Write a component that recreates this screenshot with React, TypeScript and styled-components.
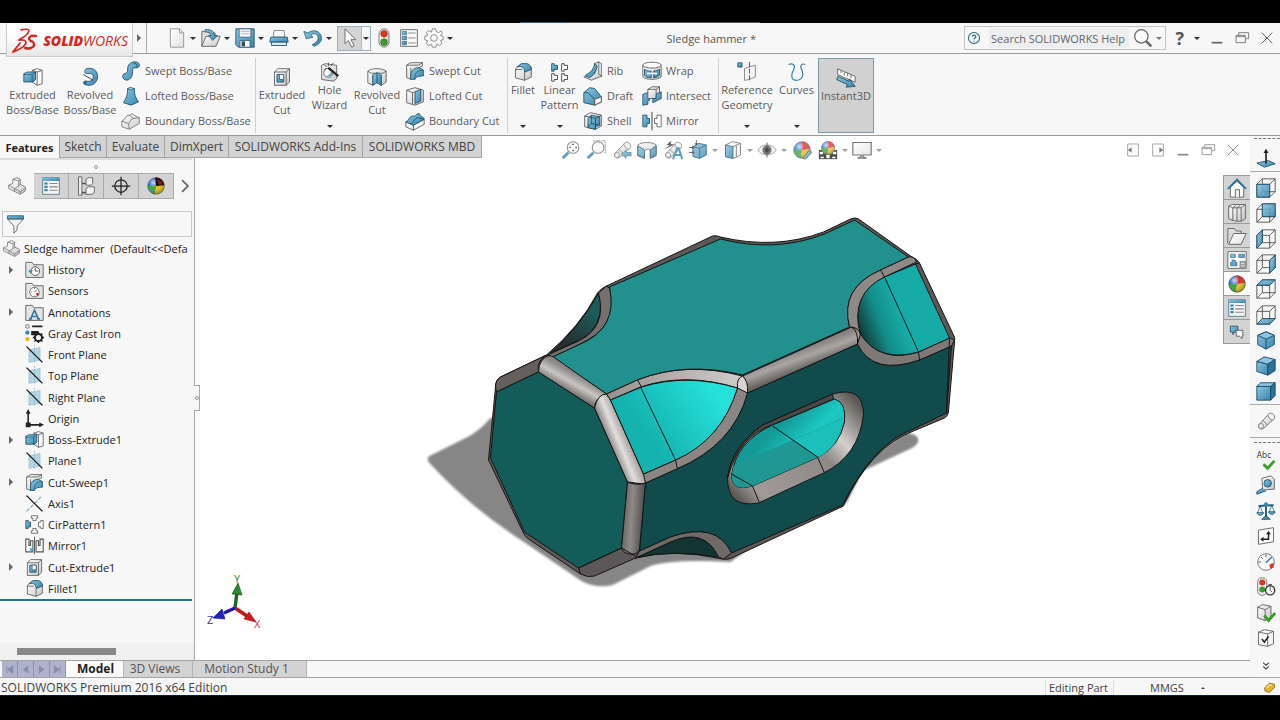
import React from "react";
import styled, { createGlobalStyle } from "styled-components";

const Global = createGlobalStyle`
  * { box-sizing: border-box; }
  html, body { margin: 0; padding: 0; background: #000; }
  body, button, input { font-family: "Open Sans", "Noto Sans", sans-serif; font-size: 12px; line-height: 15px; }
  button { margin: 0; padding: 0; border: 0; background: none; color: inherit; cursor: default; white-space: nowrap; }
  svg { display: block; flex: none; }
`;

/* ---------- icons, drawn on a 24 x 24 grid ---------- */

const B = "url(#blue)";
const G = "url(#grey)";
const D = "#1d4961";
const K = "#555";

const Ball = () => (
  <>
    <path d="M12 12L11 2A10 10 0 0 0 2 12z" fill="#2f6fd0" />
    <path d="M12 12L2 12A10 10 0 0 0 11 22z" fill="#39a23c" />
    <path d="M12 12L11 2A10 10 0 0 1 22 11z" fill="#d92c2c" />
    <path d="M12 12L11 22A10 10 0 0 0 22 11z" fill="#e6bd1e" />
    <circle cx="12" cy="12" r="10" fill="url(#shine)" stroke="#444" strokeWidth=".6" />
  </>
);

const wire = (face: string) => (
  <>
    <path d="M2 8H16V22H2zM2 8L8 2H22V16L16 22M16 8L22 2M8 2V16H22M8 16L2 22" fill="none" stroke="#444" strokeWidth=".9" />
    <path d={face} fill={B} fillOpacity=".9" stroke={D} strokeWidth=".9" />
  </>
);

const part = (
  <path d="M2 11l5-2V4l5-2 4 2v6l6 3v5l-6 4-14-7zM2 11l7 4v4M9 15l5-3V6L7 4M14 12l2-2M9 15l7 4v3M16 19l6-4M14 6l2-2" fill={G} stroke="#777" />
);
const plane = (
  <>
    <path d="M5 6L19 3V19L5 22z" fill="#b4d5e3" stroke="#9fc3d3" />
    <path d="M12 0V24" stroke="#7aa5b8" strokeDasharray="2 2" />
    <path d="M2 2L22 22" stroke="#111" strokeWidth="1.6" />
  </>
);
const folder = <path d="M1 22V3H9L11 6H23V22z" fill="#e4e4e4" stroke="#666" strokeWidth="1.2" />;
const extrude = (
  <>
    <path d="M11 4L17 2L23 4V20L17 22L11 18z" fill="#fafafa" stroke={K} />
    <path d="M17 6V22M17 6L11 4M17 6L23 4" stroke={K} fill="none" />
    <path d="M1 8L5 6H15V15L12 18H1z" fill={B} stroke={D} />
    <path d="M1 9H11V18M11 9L15 6" fill="none" stroke={D} strokeWidth=".8" />
  </>
);
const cutExtrude = (
  <>
    <path d="M3 6L7 2H21V18L17 22H3z" fill={G} stroke={K} />
    <path d="M3 6H17V22M17 6L21 2" fill="none" stroke={K} />
    <path d="M6 9H14V18H6z" fill={B} stroke={D} />
    <path d="M9 9H14V15H9z" fill="#fff" stroke={D} strokeWidth=".8" />
  </>
);
const cutSweep = (
  <>
    <path d="M2 5L7 2H21V6L17 8V11H14L7 22L2 20z" fill={G} stroke={K} />
    <path d="M2 5H16L21 2M7 8V22" fill="none" stroke={K} />
    <path d="M7 22C6 13 9 8 17 8L22 11V18C16 18 13 19 12 22z" fill={B} stroke={D} />
    <path d="M12 22C11 15 14 11 22 11" fill="none" stroke={D} strokeWidth=".8" />
  </>
);
const fillet = (
  <>
    <path d="M3 8L9 3H18L22 7V18L14 22L3 19z" fill={G} stroke={K} />
    <path d="M5 6C12 4 14 8 14 12L22 9C22 5 20 3 17 2H10z" fill={B} stroke={D} />
    <path d="M14 12V22M3 9H11" stroke={K} fill="none" />
  </>
);
const mirror = (
  <>
    <path d="M1 5H6V9H9V15H6V19H1z" fill={B} stroke={D} />
    <path d="M23 5H18V9H15V15H18V19H23z" fill="#fff" stroke={K} />
    <path d="M12 1V23" stroke="#222" />
  </>
);
const magnifier = (
  <>
    <path d="M2 22L9 15" stroke="#3c86aa" strokeWidth="3.4" />
    <circle cx="14.500" cy="9" r="7" fill="#f7fafb" stroke="#777" strokeWidth="1.3" />
  </>
);
const solid = (
  <>
    <path d="M3 7L12 3L21 7V17L12 22L3 17z" fill={B} stroke={D} />
    <path d="M3 7L12 11L21 7L12 3z" fill="#8cc5df" stroke={D} />
    <path d="M12 11V22" stroke={D} />
  </>
);
const brush = (
  <>
    <path d="M3 17L14 5L20 11L9 21C6 23 2 20 3 17z" fill={G} stroke="#666" />
    <path d="M14 5C16 1 22 3 22 6C23 9 21 11 20 11C18 11 15 8 14 5zM8 11L14 17" fill="#f5f5f5" stroke="#666" />
    <ellipse cx="6" cy="18" rx="3" ry="3" fill="#eee" stroke="#777" />
  </>
);
const listIcon = (
  <>
    <path d="M2 2H22V22H2z" fill="#f4f4f4" stroke="#4d7286" />
    <path d="M2 2H22V6H2z" fill={B} />
    <path d="M4 9H8M4 13H8M4 17H8" stroke="#3c86aa" strokeWidth="2.600" />
    <path d="M10 9H20M10 13H20M10 17H20" stroke="#888" strokeWidth="1.3" />
  </>
);

const ICONS: Record<string, React.ReactNode> = {
  newDoc: <path d="M4 1H15L20 6V23H4zM15 1V6H20" fill="url(#paper)" stroke="#888" />,
  open: (
    <>
      <path d="M1 22V4H7L9 6H17V10" fill="#ddd" stroke={K} />
      <path d="M1 22L6 10H23L18 22z" fill={G} stroke={K} />
      <path d="M5 2C12 1 16 4 16 9H20L14 15L9 9H12C12 6 9 4 5 5z" fill={B} stroke={D} strokeWidth=".8" />
    </>
  ),
  save: (
    <>
      <path d="M1 1H23V23H4L1 20z" fill={B} stroke={D} />
      <path d="M5 1H19V11H5zM6 15H18V23H6z" fill="#f6f6f6" stroke={D} strokeWidth=".8" />
      <path d="M7 4H17M7 7H17" stroke="#aaa" />
      <path d="M8 16H12V22H8z" fill="#444" />
    </>
  ),
  print: (
    <>
      <path d="M6 3H18L19 11H5z" fill="#f7f7f7" stroke="#777" />
      <path d="M2 11H22L23 17H1z" fill={B} stroke={D} />
      <path d="M3 17H21V21H3z" fill="#d9eaf2" stroke={D} />
    </>
  ),
  undo: <path d="M1 4L4 13L12 11L9 8.500C14 5 19 8 18 13C17.500 16 15 18 11 20L13 22C19 20 23 16 22 11C21 3 12 1 6 6z" fill={B} stroke={D} strokeWidth=".8" />,
  cursor: <path d="M6 1V19L10 15L14 23L17 21.500L13 14H19z" fill="#fff" stroke={K} />,
  traffic: (
    <>
      <rect x="6" y="1" width="12" height="22" rx="6" fill={G} stroke="#666" />
      <circle cx="12" cy="7" r="4" fill="#d23a22" stroke="#8a1d10" strokeWidth=".6" />
      <circle cx="12" cy="17" r="4" fill="#3d9a31" stroke="#1e5a17" strokeWidth=".6" />
    </>
  ),
  options: (
    <>
      <path d="M2 2H22V22H2z" fill="#fafafa" stroke="#555" />
      <path d="M4 4H9V8H4zM4 10H9V14H4zM4 16H9V20H4z" fill={B} stroke={D} strokeWidth=".6" />
      <path d="M11 6H20M11 12H20M11 18H20" stroke="#888" strokeWidth="1.300" />
    </>
  ),
  gear: (
    <>
      <path d="M10 1H14L15 4.500L17.500 5.500L20.500 3.500L22 6L20 9L23 10V14L20 15L21.500 18.500L18.500 21L15.500 19L14 23H10L9 19.500L5.500 21L3 18.500L4.500 15.500L1 14V10L4.500 9L3 5.500L5.500 3L9 5z" fill="#fbfbfb" stroke="#777" />
      <circle cx="12" cy="12" r="4" fill="#fff" stroke="#777" />
    </>
  ),
  extrude,
  revolve: (
    <>
      <path d="M8 2C17 0 22 6 21 13C20 20 13 24 6 21C3 19 5 16 8 17C12 18 16 16 16 12C16 8 12 7 8 8C5 8 5 3 8 2z" fill={B} stroke={D} />
      <path d="M4 9L16 16" stroke="#222" />
      <ellipse cx="6" cy="19" rx="2" ry="2.500" fill="#2b6d92" />
    </>
  ),
  sweep: <path d="M2 18C2 14 8 16 8 12C7 4 12 1 17 1C22 1 24 6 20 8C17 9 15 7 14 10C14 17 13 22 7 23C4 23 2 21 2 18zM15 3C17 2 20 4 19 7" fill={B} stroke={D} />,
  loft: (
    <>
      <path d="M8 3C8 10 7 14 3 20L12 23L21 19C17 14 16 9 16 3z" fill={B} stroke={D} />
      <path d="M8 3L11 1.500L16 3L12 5z" fill="#a6d2e6" stroke={D} strokeWidth=".8" />
    </>
  ),
  boundary: (
    <>
      <path d="M1 12C6 10 5 5 10 5L14 3C16 7 19 6 22 8V15L10 22L1 19z" fill={G} stroke="#777" />
      <path d="M1 12L9 15C12 13 11 9 15 9L22 8M9 15L10 22M10 5L15 9" fill="none" stroke="#777" />
    </>
  ),
  cutExtrude,
  hole: (
    <>
      <path d="M2 4L6 2L20 4V20L16 23L2 21z" fill={G} stroke={K} />
      <circle cx="10" cy="13" r="5.500" fill="#fff" stroke={K} />
      <path d="M7 17C10 16 13 15 14 10C16 15 12 19 7 17z" fill={B} />
      <path d="M10 7L22 17" stroke="#222" strokeWidth="2.600" />
      <path d="M10 1V5M5 3L8 6M16 1L13 5M8 8L5 9" stroke="#333" />
    </>
  ),
  cutRevolve: (
    <>
      <path d="M1 5C5 1 19 1 23 5V18L17 22V10C13 8 11 8 7 10V22L1 19z" fill={G} stroke={K} />
      <path d="M7 10C9 6 15 6 17 10V22L12 19L7 22z" fill={B} stroke={D} />
      <path d="M12 7V19" stroke={D} />
      <path d="M1 5C5 8 7 8 9 7M23 5C19 8 17 8 15 7" fill="none" stroke={K} />
    </>
  ),
  cutSweep,
  cutLoft: (
    <>
      <path d="M2 5L12 2L22 5V19L12 23L2 20z" fill={G} stroke={K} />
      <path d="M12 7L19 4V18L12 21z" fill={B} stroke={D} />
      <path d="M2 5L9 8V22M12 7L9 8" fill="none" stroke={K} />
    </>
  ),
  cutBoundary: (
    <>
      <path d="M1 13L10 17L23 10V16L10 23L1 19z" fill="#f4f4f4" stroke={K} />
      <path d="M1 13C6 11 4 6 10 6C12 8 13 3 17 3C18 7 22 6 23 10L10 17z" fill={B} stroke={D} />
      <path d="M8 15C12 12 11 8 16 8L23 10M10 17V23" fill="none" stroke={D} />
    </>
  ),
  fillet,
  pattern: (
    <>
      <path d="M2 2H5V4H9V9H5V11H2z" fill={B} stroke={D} />
      <path d="M14 2H17V4H21V9H17V11H14zM2 14H5V16H9V21H5V23H2zM14 14H17V16H21V21H17V23H14z" fill="#fff" stroke="#333" />
    </>
  ),
  rib: (
    <>
      <path d="M14 3L19 1V16L23 18L10 23L1 19L14 15z" fill={G} stroke={K} />
      <path d="M14 3C13 10 9 14 3 17L7 20C13 18 16 12 17 6z" fill={B} stroke={D} />
      <path d="M19 1L22 3V18" fill="none" stroke={K} />
    </>
  ),
  draft: (
    <>
      <path d="M1 8L8 2L14 3L22 13V19L14 23L1 20z" fill={B} stroke={D} />
      <path d="M1 8L6 8L14 16L22 13M14 16V23" fill="none" stroke={D} />
      <path d="M14 16L22 13V19L14 23z" fill="#f4f4f4" stroke={K} />
    </>
  ),
  shell: (
    <>
      <path d="M2 6L9 2L22 5V18L15 22L2 19z" fill={G} stroke={K} />
      <path d="M6 9L10 5L20 7V17L15 19V22L6 20z" fill={B} stroke={D} />
      <path d="M10 5V15L6 19M10 15L20 17M2 6L15 9V22M15 9L22 5" fill="none" stroke={D} />
    </>
  ),
  wrap: (
    <>
      <path d="M1 5V19C5 23 19 23 23 19V5z" fill={G} stroke={K} />
      <ellipse cx="12" cy="5" rx="11" ry="3.500" fill="#fff" stroke={K} />
      <path d="M3 10C8 13 11 12 11 12V20C7 20 4 19 3 17zM14 12C18 12 21 10 21 10V17C19 19 16 20 14 20z" fill={B} stroke={D} />
      <path d="M6 15H18" stroke="#fff" strokeWidth="2" />
    </>
  ),
  intersect: (
    <>
      <path d="M1 10L9 7V17L7 18V22L1 23z" fill={B} stroke={D} />
      <path d="M7 4L12 1H21V12L17 15H7z" fill={G} stroke={K} />
      <path d="M7 4H17V15M17 4L21 1" fill="none" stroke={K} />
      <path d="M17 10L23 7V15L13 20V15H17z" fill={B} stroke={D} />
    </>
  ),
  mirror,
  refGeo: (
    <>
      <path d="M1 1H6V6H1z" fill={B} stroke={D} />
      <path d="M9 8L14 6L22 4V18L14 21L9 22z" fill="#f4f4f4" stroke="#777" />
      <path d="M15 0V24" stroke="#444" strokeDasharray="6 2" />
    </>
  ),
  curves: <path d="M2 3C6 1 11 3 8 9C5 14 4 22 11 22C19 22 20 15 18 10C15 5 17 1 22 3" fill="none" stroke="#347fa5" strokeWidth="1.400" />,
  instant: (
    <>
      <path d="M2 1L23 10V17L2 8z" fill="#fafafa" stroke={K} />
      <path d="M6 3V6M10 5V9M14 6V10M18 8V12" stroke={K} />
      <path d="M2 10L16 16V13L23 22L12 23L14 20L1 14z" fill={B} stroke={D} />
    </>
  ),
  zoomFit: (
    <>
      {magnifier}
      <path d="M14.500 4L16 6H13zM14.500 14L16 12H13zM9.500 9L11.500 7.500V10.500zM19.500 9L17.500 7.500V10.500z" fill="#333" />
    </>
  ),
  zoomArea: (
    <>
      <path d="M9 1H23V16" fill="none" stroke="#555" strokeDasharray="2 1" />
      {magnifier}
    </>
  ),
  prevView: (
    <>
      {brush}
      <path d="M11 17L17 12V15H23V19H17V22z" fill={B} stroke={D} strokeWidth=".6" />
    </>
  ),
  section: (
    <>
      <path d="M1 6C5 2 19 2 23 6V19L16 22V12C13 10 11 11 9 13V22L1 19z" fill={G} stroke={K} />
      <path d="M1 7L9 12V22L1 18zM16 12L23 7V18L16 22z" fill={B} stroke={D} />
    </>
  ),
  annView: (
    <>
      {brush}
      <path d="M10 1L4 6H8L2 11L14 5H9z" fill="#333" />
      <path d="M12 23L17 10H19L23 23M14 18H21" fill="none" stroke="#3c86aa" strokeWidth="2.400" />
    </>
  ),
  orient: (
    <>
      <path d="M6 8L13 4L22 6V18L14 22L6 20z" fill={B} stroke={D} />
      <path d="M6 8L14 10V22M14 10L22 6" fill="none" stroke={D} />
      <path d="M10 0V6M1 9H7M1 15H7" stroke="#333" />
      <path d="M8 4H12L10 7zM5 7V11L8 9zM5 13V17L8 15z" fill="#333" />
    </>
  ),
  display: (
    <>
      <path d="M3 6L11 2L21 4V18L13 22L3 20z" fill="#f5f5f5" stroke={K} />
      <path d="M3 6L12 8V22L3 20z" fill={B} stroke={D} />
      <path d="M12 8L21 4M16 7V20" stroke={K} />
    </>
  ),
  eye: (
    <>
      <path d="M1 12C6 4 18 4 23 12C18 20 6 20 1 12z" fill="#f1f1f1" stroke="#777" />
      <circle cx="12" cy="12" r="5.500" fill="#555" />
      <circle cx="12" cy="12" r="2.400" fill="#111" />
      <path d="M12 3V21" stroke="#222" />
    </>
  ),
  ball: <Ball />,
  darkBall: (
    <>
      <Ball />
      <path d="M12 12L11 2A10 10 0 0 1 22 11z" fill="#1c1010" />
      <path d="M13 4Q18 5 20 10L16 11z" fill="#8d1a1a" />
    </>
  ),
  ballPen: (
    <>
      <Ball />
      <path d="M13 22L21 12L24 15L16 23z" fill={B} stroke="#555" />
    </>
  ),
  scene: (
    <>
      <path d="M1 12H23V23H1z" fill="#222" />
      <path d="M2 14H6V17H2zM10 18H14V22H10zM18 14H22V17H18zM3 20H7V22H3zM17 20H21V22H17z" fill="#fff" />
      <g transform="translate(2.500 0) scale(.8)"><Ball /></g>
    </>
  ),
  monitor: (
    <>
      <path d="M1 3H23V18H1z" fill="url(#paper)" stroke="#555" strokeWidth="1.400" />
      <path d="M10 18V21H7V22H17V21H14V18" fill="#888" stroke="#555" />
    </>
  ),
  part,
  tree: listIcon,
  config: (
    <>
      <path d="M5 2V20H12M5 9H12" fill="none" stroke="#555" strokeWidth="2" />
      <path d="M3 1H7V23H3z" fill="#eee" stroke="#555" />
      <path d="M12 4L15 2H20V9L18 11H12zM12 15L15 13H22V20L19 22H12z" fill="#f4f4f4" stroke="#555" />
    </>
  ),
  target: (
    <>
      <circle cx="12" cy="12" r="7.500" fill="none" stroke="#222" strokeWidth="1.500" />
      <path d="M12 1V23M1 12H23" stroke="#222" strokeWidth="1.500" />
    </>
  ),
  funnel: (
    <>
      <path d="M2 5L10 14V23L14 19V14L22 5z" fill="#f5f5f5" stroke={K} />
      <path d="M2 1H22V5H2z" fill={B} stroke={D} />
    </>
  ),
  history: (
    <>
      {folder}
      <circle cx="13" cy="14" r="5.500" fill="#fff" stroke="#333" />
      <path d="M13 10V14H17" fill="none" stroke="#333" />
      <path d="M4 13H10L7 17z" fill="#3c86aa" />
    </>
  ),
  sensor: (
    <>
      {folder}
      <circle cx="12" cy="14" r="6" fill="#fff" stroke="#555" />
      <path d="M12 14L15 11M8 14H9M12 10V9" stroke="#333" />
      <path d="M14 15H17V19H15z" fill="#c1272d" />
    </>
  ),
  annot: (
    <>
      {folder}
      <path d="M7 20L12 9L17 20M9 17H15M5 20H9M15 20H19" fill="none" stroke="#2f789e" strokeWidth="2" />
    </>
  ),
  material: (
    <>
      <path d="M9 3H22M9 10H16V13H9z" stroke="#222" strokeWidth="2.400" fill="#222" />
      <circle cx="3" cy="3" r="2.500" fill="#ddd" stroke="#777" />
      <circle cx="3" cy="11" r="2.700" fill="#3c86aa" />
      <circle cx="3" cy="19" r="2.700" fill="#e3b516" />
      <circle cx="17" cy="17" r="4.500" fill="#eee" stroke="#222" strokeWidth="2.500" />
      <path d="M17 10V13M17 21V24M10 17H13M21 17H24M12 12L14 14M20 20L22 22M22 12L20 14M12 22L14 20" stroke="#222" strokeWidth="1.800" />
    </>
  ),
  plane,
  origin: (
    <>
      <path d="M4 3V20H21" fill="none" stroke="#222" strokeWidth="2" />
      <path d="M1 6L4 0L7 6zM18 17L24 20L18 23zM1 17H7V23H1z" fill="#222" />
    </>
  ),
  axis: (
    <>
      <path d="M2 22L22 2" stroke="#7fa6ba" strokeWidth="1.500" strokeDasharray="5 2" />
      <path d="M2 2L22 22" stroke="#111" strokeWidth="1.600" />
    </>
  ),
  cir: (
    <>
      <path d="M1 7H4V9H7V15H4V17H1z" fill={B} stroke={D} />
      <path d="M8 1H16V4H14V7H10V4H8zM8 23H16V20H14V17H10V20H8zM23 7H20V9H17V15H20V17H23z" fill="#fff" stroke={K} />
    </>
  ),
  mirrorFeat: (
    <>
      <path d="M1 4H5V12H7V6H10V20H1z" fill="#fff" stroke="#555" strokeWidth="1.400" />
      <path d="M23 4H19V12H17V6H14V20H23z" fill="#fff" stroke="#555" strokeWidth="1.400" />
      <path d="M6 15H10V20H6z" fill={B} />
      <path d="M12 1V23" stroke="#333" />
    </>
  ),
  house: (
    <>
      <path d="M4 11V23H20V11L12 4z" fill="#fff" stroke={K} />
      <path d="M10 23V14H15V23" fill="#eee" stroke={K} />
      <path d="M1 13L12 2L23 13" fill="none" stroke="#2f789e" strokeWidth="2.400" />
    </>
  ),
  library: (
    <>
      <path d="M2 5L6 3L22 3V20L17 23H10L2 20z" fill={G} stroke={K} />
      <path d="M2 5L7 7V22M7 7L11 4M7 7L12 7V23M12 7L16 4M12 7H17V23M17 7L22 3" fill="none" stroke={K} />
    </>
  ),
  explorer: (
    <>
      <path d="M1 21V3H9L11 6H17V9" fill="#ddd" stroke={K} />
      <path d="M2 22L8 9H23L17 22z" fill="url(#paper)" stroke={K} />
    </>
  ),
  palette: (
    <>
      <path d="M1 2H23V22H1z" fill="#fff" stroke={K} />
      <path d="M4 5H10V9H4zM14 5H21V9H14zM4 15H6V12H10V15H12V19H4z" fill={B} stroke={D} strokeWidth=".6" />
      <path d="M15 13H23V22H15z" fill="#999" />
      <path d="M17 16H21M17 19H21" stroke="#fff" />
    </>
  ),
  props: listIcon,
  forum: (
    <>
      <path d="M4 5H13V12H9L7 15V12H4z" fill={B} stroke={D} />
      <path d="M11 10H19V17H18V20L15 17H11z" fill="#f4f4f4" stroke={K} />
    </>
  ),
  normal: (
    <>
      <path d="M1 18L15 15L23 19L10 23z" fill={B} stroke={D} />
      <path d="M12 5V19" stroke="#222" strokeWidth="2" />
      <path d="M9 6L12 1L15 6z" fill="#222" />
    </>
  ),
  front: wire("M2 8H16V22H2z"),
  back: wire("M8 2H22V16H8z"),
  left: wire("M2 8L8 2V16L2 22z"),
  right: wire("M16 8L22 2V16L16 22z"),
  top: wire("M2 8L8 2H22L16 8z"),
  bottom: wire("M2 22L8 16H22L16 22z"),
  iso: solid,
  trimetric: (
    <>
      <path d="M2 7L14 10V22L2 18z" fill={B} stroke={D} />
      <path d="M2 7L10 2L22 5L14 10z" fill="#8cc5df" stroke={D} />
      <path d="M14 10L22 5V17L14 22z" fill="#2c7196" stroke={D} />
    </>
  ),
  dimetric: (
    <>
      <path d="M2 7H17V22H2z" fill={B} stroke={D} />
      <path d="M2 7L6 3H22L17 7z" fill="#8cc5df" stroke={D} />
      <path d="M17 7L22 3V17L17 22z" fill="#2c7196" stroke={D} />
    </>
  ),
  brush,
  spell: (
    <>
      <path d="M9 17L14 22L22 13" fill="none" stroke="#3b9b2b" strokeWidth="3.400" />
      <text x="1" y="10" fontSize="10" fill="#333">Abc</text>
    </>
  ),
  measure: (
    <>
      <path d="M7 4L18 1L22 5V17L8 18z" fill={G} stroke={K} />
      <circle cx="14" cy="10" r="4.500" fill={B} stroke={D} />
      <path d="M8 16L1 20V23L12 19" fill={B} stroke={D} />
    </>
  ),
  mass: (
    <>
      <path d="M12 3V21M3 6L21 5" stroke="#24648a" strokeWidth="2.400" />
      <path d="M7 22H17L14 19H10zM1 14H9C8 18 2 18 1 14zM15 13H23C22 17 16 17 15 13z" fill={B} stroke={D} />
      <path d="M5 6L2 14M5 6L8 14M19 5L16 13M19 5L22 13" stroke={D} strokeWidth=".8" />
      <circle cx="12" cy="4" r="2.500" fill="#3c86aa" />
    </>
  ),
  sectionProp: (
    <>
      <path d="M3 5L21 2V19L3 22z" fill="#fafafa" stroke={K} />
      <path d="M8 16H15V9" fill="none" stroke="#222" strokeWidth="1.800" />
      <path d="M9 13V19L5 16zM12 10H18L15 6z" fill="#222" />
    </>
  ),
  gauge: (
    <>
      <circle cx="12" cy="12" r="10" fill="#fbfbfb" stroke="#666" />
      <path d="M12 13L19 6" stroke="#2f789e" strokeWidth="1.600" />
      <path d="M12 3V6M3 12H6M6 6L8 8" stroke="#333" />
      <path d="M16 15L21 13V19L17 20z" fill="#d8372c" />
    </>
  ),
  perf: (
    <>
      <rect x="2" y="1" width="11" height="21" rx="5" fill="#eee" stroke="#666" />
      <circle cx="7.500" cy="6.500" r="3.600" fill="#d23a22" />
      <circle cx="7.500" cy="15" r="3.600" fill="#3d9a31" />
      <circle cx="17" cy="16" r="5.500" fill="#fff" stroke="#333" strokeWidth="1.600" />
      <path d="M17 12V16L19 18M15 9H19" fill="none" stroke="#333" />
    </>
  ),
  checkCube: (
    <>
      <path d="M2 5L8 2L18 4V17L11 21L2 18z" fill={G} stroke={K} />
      <path d="M2 5L11 8V21M11 8L18 4" fill="none" stroke={K} />
      <path d="M10 15L15 21L23 12" fill="none" stroke="#3b9b2b" strokeWidth="3.400" />
    </>
  ),
  checkBox: (
    <>
      <path d="M3 5L10 2L21 4V19L14 22L3 20z" fill="#f6f6f6" stroke={K} />
      <path d="M3 5L14 7V22M14 7L21 4" fill="none" stroke={K} />
      <path d="M7 13L10 17L15 10" fill="none" stroke="#222" strokeWidth="1.800" />
    </>
  ),
  help: (
    <>
      <circle cx="12" cy="12" r="9.500" fill="#f2fafc" stroke="#2d6577" strokeWidth="1.800" />
      <path d="M9 10C9 6 15 6 15 9.500C15 12 12 12 12 14.500M12 16.500V18.500" fill="none" stroke="#2d6577" strokeWidth="2" />
    </>
  ),
  search: (
    <>
      <circle cx="10" cy="10" r="8" fill="#fdfdfd" stroke="#666" strokeWidth="1.500" />
      <path d="M16 16L22 22" stroke="#666" strokeWidth="3" />
    </>
  ),
  min: <path d="M4 19H20" stroke="#666" strokeWidth="2.600" />,
  restore: <path d="M7 8V4H22V13H17M3 8H17V19H3zM3 10H17" fill="none" stroke="#777" strokeWidth="1.400" />,
  close: <path d="M4 4L20 20M20 4L4 20" stroke="#666" strokeWidth="1.500" />,
  paneL: (
    <>
      <path d="M4 3H20V21H4z" fill="none" stroke="#777" strokeWidth="1.300" />
      <path d="M4 12L10 8V16z" fill="#555" />
    </>
  ),
  paneR: (
    <>
      <path d="M4 3H20V21H4z" fill="none" stroke="#777" strokeWidth="1.300" />
      <path d="M20 12L14 8V16z" fill="#555" />
    </>
  ),
  tag: (
    <>
      <path d="M3 13L12 4L21 6V12L12 21L4 19z" fill="#e3b52a" stroke="#8b6a0d" strokeWidth="1.600" />
      <path d="M6 13L13 7L17 8" fill="none" stroke="#fff2b0" strokeWidth="2" />
    </>
  ),
  first: <path d="M6 4V20M19 4V20L8 12z" fill="#868cae" stroke="#868cae" strokeWidth="2" />,
  prev: <path d="M18 3V21L6 12z" fill="#868cae" />,
  next: <path d="M6 3V21L18 12z" fill="#868cae" />,
  last: <path d="M18 4V20M5 4V20L16 12z" fill="#868cae" stroke="#868cae" strokeWidth="2" />,
  chevron: <path d="M7 2L17 12L7 22" fill="none" stroke="#666" strokeWidth="3" />,
  more: <path d="M5 4L12 10L19 4M5 13L12 19L19 13" fill="none" stroke="#444" strokeWidth="2.600" />,
};

const Icon = ({ name, size = 20 }: { name: string; size?: number }) => (
  <svg width={size} height={size} viewBox="0 0 24 24" aria-hidden="true">
    {ICONS[name]}
  </svg>
);

const DefsSvg = styled.svg`position: absolute;`;
const Defs = () => (
  <DefsSvg width="0" height="0" aria-hidden="true">
    <defs>
      <linearGradient id="blue" x1="0" y1="0" x2="1" y2="1">
        <stop offset="0" stopColor="#8cc6e0" />
        <stop offset="1" stopColor="#3685ad" />
      </linearGradient>
      <linearGradient id="grey" x1="0" y1="0" x2="1" y2="1">
        <stop offset="0" stopColor="#fff" />
        <stop offset="1" stopColor="#c9c9c9" />
      </linearGradient>
      <linearGradient id="paper" x1="0" y1="0" x2="1" y2="1">
        <stop offset="0" stopColor="#fff" />
        <stop offset="1" stopColor="#e2e2e2" />
      </linearGradient>
      <radialGradient id="shine" cx=".35" cy=".3" r=".75">
        <stop offset="0" stopColor="#fff" stopOpacity=".75" />
        <stop offset=".4" stopColor="#fff" stopOpacity="0" />
        <stop offset="1" stopColor="#000" stopOpacity=".35" />
      </radialGradient>
    </defs>
  </DefsSvg>
);

const Caret = styled.span<{ $color?: string }>`
  width: 0;
  height: 0;
  flex: none;
  border: 3px solid transparent;
  border-bottom: 0;
  border-top-color: ${(p) => p.$color || "#333"};
`;
const RightCaret = styled.span`
  display: block;
  width: 0;
  height: 0;
  border: 4px solid transparent;
  border-right: 0;
  border-left-color: #666;
`;

/* ---------- frame ---------- */

const Page = styled.div`
  min-height: 100vh;
  display: flex;
  flex-direction: column;
  background: #f7f7f7;
  color: #333;
  overflow: hidden;
`;
const TopBand = styled.div`
  height: 23px;
  background: #000;
  display: flex;
  justify-content: center;
  align-items: flex-end;
`;
const Glint = styled.span`
  width: 240px;
  height: 1px;
  background: linear-gradient(90deg, #2d5878 20%, #555 20%);
`;
const BottomBand = styled.div`
  height: 25px;
  background: #000;
  border-top: 1px solid #0b1c4a;
`;

const TitleBar = styled.header`
  height: 31px;
  display: flex;
  align-items: center;
  border-bottom: 1px solid #9a9a9a;
`;
const Logo = styled.div`
  align-self: flex-start;
  z-index: 1;
  width: 127px;
  height: 34px;
  margin-left: 6px;
  margin-bottom: -4px;
  padding: 2px 4px 0 5px;
  display: flex;
  align-items: center;
  justify-content: space-between;
  border: 1px solid #ccc;
  border-top: 0;
  background: linear-gradient(#fff 40%, #e6e6e6);
  color: #d3281f;
  font: italic 14px/18px "Open Sans", sans-serif;
  b { font-weight: 800; }
`;
const LogoNext = styled.button`
  width: 14px;
  height: 30px;
  padding-left: 4px;
  border-right: 1px solid #aaa;
`;
const Quick = styled.nav`
  display: flex;
  align-items: center;
  margin-left: 20px;
`;
const QuickItem = styled.div<{ $w?: number }>`
  display: flex;
  align-items: center;
  justify-content: space-between;
  width: ${(p) => p.$w || 34}px;
  padding-right: 5px;
`;
const SelectTool = styled.div`
  display: flex;
  height: 25px;
  margin-right: 3px;
  border: 1px solid #9bb0bd;
  background: #f7f7f7;
`;
const SelectMain = styled.button`
  width: 24px;
  display: grid;
  place-items: center;
  background: #d4d4d4;
  border-right: 1px solid #b9b9b9;
`;
const SelectMore = styled.button`
  width: 8px;
  display: grid;
  place-items: center;
`;
const DocTitle = styled.h1`
  flex: 1;
  margin: 0;
  font-size: 11px;
  font-weight: 400;
  text-align: center;
  color: #555;
`;
const SearchBox = styled.form`
  display: flex;
  align-items: center;
  width: 202px;
  height: 24px;
  padding: 1px 3px 1px 2px;
  border: 1px solid #c4c4c4;
  justify-content: space-between;
`;
const SearchInput = styled.input`
  width: 140px;
  height: 20px;
  border: 0;
  padding: 0 2px;
  margin-left: 4px;
  background: #eceef0;
  color: #666;
  font-size: 11px;
  &::placeholder { color: #666; opacity: 1; }
`;
const WinButtons = styled.div`
  display: flex;
  align-items: center;
  gap: 9px;
  padding: 0 5px 0 9px;
`;
const HelpMark = styled.button`
  display: flex;
  align-items: center;
  gap: 10px;
  font-size: 18px;
  font-weight: 700;
  color: #555;
`;

/* ---------- ribbon ---------- */

const Ribbon = styled.div`
  height: 82px;
  padding: 4px 0 2px 4px;
  display: flex;
  border-bottom: 1px solid #9a9a9a;
  color: #5c5c5c;
`;
const Divider = styled.span`
  width: 1px;
  background: #d0d0d0;
`;
const Big = styled.button<{ $w: number; $menu?: boolean; $on?: boolean }>`
  width: ${(p) => p.$w}px;
  display: flex;
  flex-direction: column;
  align-items: center;
  padding-top: ${(p) => (p.$menu ? 4 : 9)}px;
  padding-bottom: 5px;
  text-align: center;
  white-space: pre;
  font-size: 11px;
  border: ${(p) => (p.$on ? "1px solid #7d9aab" : "0")};
  background: ${(p) => (p.$on ? "#d1d1d1" : "none")};
  ${Caret} { margin-top: auto; }
`;
const Column = styled.div<{ $w: number }>`
  width: ${(p) => p.$w}px;
  display: grid;
  grid-template-rows: repeat(3, 25px);
`;
const Small = styled.button`
  display: flex;
  align-items: center;
  gap: 4px;
  padding-left: 2px;
  font-size: 11px;
`;

const BigTool = ({ icon, label, w, menu, on }: { icon: string; label: string; w: number; menu?: boolean; on?: boolean }) => (
  <Big $w={w} $menu={menu} $on={on}>
    <Icon name={icon} size={20} />
    {label}
    {menu && <Caret />}
  </Big>
);

const SmallTools = ({ w, items }: { w: number; items: [string, string][] }) => (
  <Column $w={w}>
    {items.map(([icon, label]) => (
      <Small key={label}>
        <Icon name={icon} size={20} />
        {label}
      </Small>
    ))}
  </Column>
);

/* ---------- work area ---------- */

const Work = styled.div`
  flex: 1;
  display: flex;
`;
const Center = styled.div`
  flex: 1;
  min-width: 0;
  display: flex;
  flex-direction: column;
  background: #fff;
`;
const TabRow = styled.div`
  height: 22px;
  display: flex;
  align-items: flex-start;
`;
const CmdTab = styled.button<{ $on?: boolean; $w: number }>`
  width: ${(p) => p.$w}px;
  height: 22px;
  border-right: 1px solid #a4a4a4;
  border-bottom: ${(p) => (p.$on ? 0 : "1px solid #a4a4a4")};
  background: ${(p) => (p.$on ? "#f7f7f7" : "#d3d3d3")};
  font-size: ${(p) => (p.$on ? 11 : 12)}px;
  font-weight: ${(p) => (p.$on ? 700 : 400)};
  color: ${(p) => (p.$on ? "#222" : "#444")};
`;
const HeadsUp = styled.div`
  position: relative;
  z-index: 1;
  flex: 1;
  display: flex;
  align-items: center;
  padding: 4px 0 0 79px;
  opacity: 0.8;
`;
const ViewBtn = styled.button<{ $w: number }>`
  width: ${(p) => p.$w}px;
  display: flex;
  align-items: center;
  gap: 4px;
`;
const DocButtons = styled.div`
  position: relative;
  z-index: 1;
  display: flex;
  gap: 9px;
  padding: 6px 9px 0 0;
  opacity: 0.75;
`;

const Body = styled.div`
  flex: 1;
  display: flex;
`;
const Panel = styled.aside`
  width: 195px;
  display: flex;
  flex-direction: column;
  background: #f7f7f7;
  border-right: 1px solid #a8a8a8;
  color: #222;
`;
const Grip = styled.div`
  height: 15px;
  margin-right: 2px;
  border-top: 2px solid #ddd;
  display: grid;
  place-items: center;
`;
const Dot = styled.i`
  width: 4px;
  height: 4px;
  border: 1px solid #999;
  border-radius: 50%;
`;
const PanelTabs = styled.div`
  display: flex;
  align-items: center;
  height: 26px;
`;
const PanelTab = styled.button<{ $on?: boolean }>`
  width: ${(p) => (p.$on ? 34 : 35)}px;
  height: 26px;
  display: grid;
  place-items: center;
  background: ${(p) => (p.$on ? "none" : "#d3d3d3")};
  border: ${(p) => (p.$on ? 0 : "1px solid #aaa")};
  border-left-width: 0;
`;
const PanelMore = styled.button`margin-left: 4px;`;
const Filter = styled.label`
  display: flex;
  align-items: center;
  height: 26px;
  margin: 12px 2px 0 2px;
  padding-left: 3px;
  border: 1px solid #c9c9c9;
`;
const FilterInput = styled.input`
  flex: 1;
  min-width: 0;
  border: 0;
  background: none;
  outline: 0;
`;
const RootRow = styled.button`
  display: flex;
  align-items: center;
  gap: 3px;
  height: 22px;
  padding-left: 2px;
  white-space: pre;
  font-size: 11px;
`;
const Tree = styled.ul`
  list-style: none;
  margin: 0 2px 0 0;
  padding: 0;
  height: 342px;
  display: grid;
  grid-template-rows: repeat(16, 1fr);
  border-bottom: 2px solid #2b7396;
`;
const Node = styled.li`
  display: flex;
  align-items: center;
`;
const NodeArrow = styled.span`
  width: 25px;
  padding-left: 9px;
`;
const NodeBtn = styled.button`
  display: flex;
  align-items: center;
  gap: 4px;
  font-size: 11px;
`;
const HScroll = styled.div`
  height: 17px;
  margin-top: auto;
  padding: 5px 0 0 17px;
  background: #f0f0f0;
`;
const Thumb = styled.div`
  width: 99px;
  height: 7px;
  background: #888;
`;

const Viewport = styled.main`
  position: relative;
  flex: 1;
  min-width: 0;
  background: #fff;
`;
const Model = styled.svg`
  width: 100%;
  height: 502px;
`;
const Handle = styled.button`
  position: absolute;
  left: -1px;
  top: 227px;
  width: 6px;
  height: 26px;
  display: grid;
  place-items: center;
  border: 1px solid #a8a8a8;
  border-left: 0;
  background: #f7f7f7;
`;
const Triad = styled.svg`
  position: absolute;
  left: 10px;
  bottom: 24px;
`;
const TaskTabs = styled.nav`
  position: absolute;
  right: 0;
  top: 17px;
  display: grid;
  gap: 1px;
  border: 1px solid #999;
  border-right: 0;
  background: #999;
`;
const TaskTab = styled.button<{ $on?: boolean }>`
  width: 26px;
  height: 23px;
  display: grid;
  place-items: center;
  background: ${(p) => (p.$on ? "#fff" : "#d3d3d3")};
`;

const SheetRow = styled.div`
  height: 18px;
  display: flex;
  padding-left: 2px;
  background: #f7f7f7;
  border-top: 1px solid #a4a4a4;
  border-bottom: 1px solid #a4a4a4;
`;
const NavBtn = styled.button`
  width: 16px;
  display: grid;
  place-items: center;
  background: #b0b2cc;
  border: 1px solid #8f93b0;
  border-width: 0 1px 0 0;
`;
const Sheet = styled.button<{ $on?: boolean; $w: number }>`
  width: ${(p) => p.$w}px;
  padding-right: 6px;
  padding-left: ${(p) => (p.$on ? 8 : 0)}px;
  line-height: 14px;
  background: ${(p) => (p.$on ? "#fafafa" : "#d3d3d3")};
  border-right: 1px solid #b5b5b5;
  font-weight: ${(p) => (p.$on ? 700 : 400)};
  color: ${(p) => (p.$on ? "#222" : "#555")};
`;

const Rail = styled.aside`
  width: 30px;
  display: flex;
  flex-direction: column;
  padding: 2px 0 0;
  border-bottom: 1px solid #aaa;
`;
const Dotted = styled.div`
  margin-left: 4px;
  border-top: 1px dashed #777;
`;
const RailGroup = styled.div<{ $h: number; $pad?: number; $last?: boolean }>`
  height: ${(p) => p.$h}px;
  display: grid;
  grid-auto-rows: 1fr;
  justify-items: center;
  padding-left: 2px;
  padding-top: ${(p) => p.$pad || 0}px;
  border-bottom: ${(p) => (p.$last ? "0" : "1px solid #aaa")};
`;
const RailBtn = styled.button`
  display: grid;
  place-items: center;
`;
const RailSpace = styled.div`height: 4px;`;
const RailMore = styled.button`
  margin: auto 0 6px 11px;
  width: 10px;
`;

const Status = styled.footer`
  height: 17px;
  display: flex;
  align-items: center;
  padding: 2px 4px 0 1px;
  color: #444;
  font-size: 11px;
`;
const StatusText = styled.span`
  flex: 1;
  font-size: 12px;
`;
const StatusCell = styled.span<{ $w: number }>`
  width: ${(p) => p.$w}px;
  padding-left: 3px;
  border-left: 1px solid #ddd;
`;
const Units = styled.button`
  display: flex;
  align-items: center;
  gap: 17px;
  width: 116px;
  padding-left: 36px;
  font-size: 11px;
  border-left: 1px solid #ddd;
`;
const UpCaret = styled.span`
  border: 2px solid transparent;
  border-top: 0;
  border-bottom-color: #444;
`;
const StatusEnd = styled.span`
  width: 47px;
  display: flex;
  justify-content: flex-end;
`;

const Hammer = () => (
  <Model viewBox="195 158 1054 502" role="img" aria-label="Sledge hammer model">
    <defs>
      <linearGradient id="edge1" gradientUnits="userSpaceOnUse" x1="575" y1="374" x2="566" y2="390">
        <stop offset="0" stopColor="#8b8785" /><stop offset=".5" stopColor="#c9c5c3" /><stop offset="1" stopColor="#7b7775" />
      </linearGradient>
      <linearGradient id="edge2" gradientUnits="userSpaceOnUse" x1="626" y1="436" x2="609" y2="443">
        <stop offset="0" stopColor="#a8a4a2" /><stop offset=".5" stopColor="#e2dfde" /><stop offset="1" stopColor="#8d8987" />
      </linearGradient>
      <linearGradient id="edge3" gradientUnits="userSpaceOnUse" x1="624" y1="515" x2="642" y2="516">
        <stop offset="0" stopColor="#6f6b69" /><stop offset=".4" stopColor="#8f8a88" /><stop offset="1" stopColor="#565352" />
      </linearGradient>
      <linearGradient id="edge4" gradientUnits="userSpaceOnUse" x1="796" y1="350" x2="803" y2="369">
        <stop offset="0" stopColor="#85807e" /><stop offset=".45" stopColor="#a9a5a2" /><stop offset="1" stopColor="#696563" />
      </linearGradient>
      <linearGradient id="edge5" gradientUnits="userSpaceOnUse" x1="610" y1="400" x2="742" y2="380">
        <stop offset="0" stopColor="#98938f" /><stop offset="1" stopColor="#d0ccca" />
      </linearGradient>
      <linearGradient id="pocket1" gradientUnits="userSpaceOnUse" x1="650" y1="440" x2="715" y2="395">
        <stop offset="0" stopColor="#14b3ae" /><stop offset="1" stopColor="#26e0da" />
      </linearGradient>
      <linearGradient id="pocket2" gradientUnits="userSpaceOnUse" x1="858" y1="325" x2="898" y2="310">
        <stop offset="0" stopColor="#123f3e" /><stop offset=".5" stopColor="#138d89" /><stop offset="1" stopColor="#16aba6" />
      </linearGradient>
      <linearGradient id="slotEdge" gradientUnits="userSpaceOnUse" x1="740" y1="500" x2="850" y2="395">
        <stop offset="0" stopColor="#5f5b59" /><stop offset=".12" stopColor="#a09b98" /><stop offset=".6" stopColor="#8e8986" />
        <stop offset=".75" stopColor="#d3d0ce" /><stop offset="1" stopColor="#5d5957" />
      </linearGradient>
      <linearGradient id="slotIn" gradientUnits="userSpaceOnUse" x1="795" y1="410" x2="835" y2="450">
        <stop offset="0" stopColor="#139a96" /><stop offset=".5" stopColor="#1cc9c4" /><stop offset="1" stopColor="#19b5b0" />
      </linearGradient>
      <linearGradient id="notch" gradientUnits="userSpaceOnUse" x1="590" y1="310" x2="570" y2="348">
        <stop offset="0" stopColor="#1c5c5a" /><stop offset="1" stopColor="#262d2d" />
      </linearGradient>
      <filter id="soft" x="-10%" y="-10%" width="120%" height="120%"><feGaussianBlur stdDeviation="1" /></filter>
    </defs>

    <g fill="#868686" filter="url(#soft)">
      <path d="M490 418Q478 432 465 438L429 456Q425 459 429 463Q470 508 525 543L581 581Q596 589 612 585L650 566Q672 559 730 562L760 540L560 420z" />
      <path d="M905 433Q918 434 918 440Q918 446 905 451L862 471L845 505L850 470z" />
    </g>

    <g stroke="#141414" strokeWidth="1" strokeLinejoin="round">
      <path
        d="M495 387Q495 380 500 377L546 355Q580 326 597 293Q601 288 606 286L712 236Q716 235 720 237Q775 250 823 232L850 219Q855 217 858 219L910 256Q917 259 919 263L953 335Q955 338 954 342L948 411Q948 416 944 418L913 431Q870 447 843 506L731 558Q727 560 722 559Q672 548 635 558L594 576Q587 578 580 574L528 539Q524 536 522 531L488 460Z"
        fill="#5c5857"
      />
      <path d="M496 392L538 372Q536 361 546 355L500 377Q495 380 495 387z" fill="#65605e" />
      <path d="M549 354Q581 325 598 293Q605 315 590 333Q582 340 568 345z" fill="url(#notch)" />
      <path d="M606 286L609 288Q617 317 595 335Q584 343 552 357L547 355L578 341Q607 327 598 293z" fill="#75706e" />
      <path
        d="M552 357L580 344Q618 328 609 287L720 239Q775 253 824 234L854 220L908 257L880 270Q839 288 849 327L742 375Q685 361 637 380L606 394z"
        fill="#22918d"
      />
      <path d="M496 392L538 372L594 408L627 482L621 548L578 568L524 532L490 458z" fill="#145c59" />
      <path
        d="M645 483L676 469Q733 445 747 393L857 344Q872 376 919 360L951 346L946 413L913 429Q873 443 842 505L731 553Q716 521 670 537L639 551z"
        fill="#124b4b"
      />
      <path d="M541 361Q547 353 553 357L606 394Q594 398 594 408L538 372Q538 365 541 361z" fill="url(#edge1)" />
      <path d="M594 408Q597 394 606 394L610 400L643 474Q648 482 643 484L627 482z" fill="url(#edge2)" />
      <path d="M627 482Q636 486 645 483L639 549Q637 555 630 554Q622 553 621 548z" fill="url(#edge3)" />
      <path d="M606 394L637 380Q685 361 742 376L737 388Q685 372 640 387L610 400z" fill="url(#edge5)" />
      <path d="M643 474L675 460Q722 438 737 388L742 376Q747 380 747 393Q733 445 676 469L645 483z" fill="#8b8683" />
      <path d="M610 400L641 387Q686 373 737 388Q721 440 675 460L643 474z" fill="url(#pocket1)" />
      <path d="M640 387L675 460M637 380L641 387M675 460L677 469" fill="none" />
      <path d="M742 376L851 327Q861 328 860 337L857 344L747 393Q747 381 742 376z" fill="url(#edge4)" />
      <path d="M737 388Q736 378 742 376Q748 381 747 393z" fill="#d6d3d0" />
      <path d="M849 327Q839 288 880 270L908 257Q914 256 916 262L884 277Q849 296 860 334Q858 327 849 327z" fill="#8e8986" />
      <path d="M860 334Q880 364 918 352L949 338L954 340L951 346L919 360Q872 376 857 344z" fill="#7e7976" />
      <path d="M884 277L915 264L949 338L918 352Q878 363 860 334Q849 294 884 277z" fill="url(#pocket2)" />
      <path d="M884 277L918 352M880 270L884 277M918 352L919 360M915 264L919 263M851 327Q858 331 857 344" fill="none" />
      <path d="M949 338L946 413L948 411" fill="none" />

      <path d="M762 425L832 394Q863 385 863 415Q858 456 823 473L758 503Q727 509 727 478Q731 447 762 425z" fill="url(#slotEdge)" />
      <path d="M762 425L832 394L833 399L772 425Q739 435 727 478Q731 447 762 425z" fill="#4a4746" />
      <path d="M772 425L834 399Q846 402 844 422Q839 446 818 457L752 486Q732 492 731 476Q735 442 772 425z" fill="url(#slotIn)" />
      <path d="M733 466L842 418Q840 446 818 457L752 486Q732 492 731 476z" fill="#1f9792" stroke="none" />
      <path d="M793 440L843 418Q839 446 818 457z" fill="#1bc0bb" stroke="none" />
      <path d="M772 426L817 457L824 473M731 474L752 486L759 503" fill="none" />
      <path d="M635 558L670 542Q704 527 718 557Q672 549 635 558z" fill="#123533" />
      <path d="M635 558L670 542Q704 527 718 557L723 559L731 553Q716 521 670 537L639 551z" fill="#6f6a68" />
      <path d="M578 568L621 548L635 556M580 574L578 568" fill="none" />
    </g>
  </Model>
);

const quick = ["newDoc", "open", "save", "print", "undo"];
const tabs: [string, number][] = [["Features", 60], ["Sketch", 47], ["Evaluate", 58], ["DimXpert", 64], ["SOLIDWORKS Add-Ins", 134], ["SOLIDWORKS MBD", 119]];
const views: [string, number, boolean?][] = [
  ["zoomFit", 25], ["zoomArea", 26], ["prevView", 25], ["section", 26], ["annView", 25], ["orient", 35, true],
  ["display", 34, true], ["eye", 35, true], ["ballPen", 26], ["scene", 34, true], ["monitor", 34, true],
];
const nodes: [string, string, boolean?][] = [
  ["history", "History", true], ["sensor", "Sensors"], ["annot", "Annotations", true], ["material", "Gray Cast Iron"],
  ["plane", "Front Plane"], ["plane", "Top Plane"], ["plane", "Right Plane"], ["origin", "Origin"],
  ["extrude", "Boss-Extrude1", true], ["plane", "Plane1"], ["cutSweep", "Cut-Sweep1", true], ["axis", "Axis1"],
  ["cir", "CirPattern1"], ["mirrorFeat", "Mirror1"], ["cutExtrude", "Cut-Extrude1", true], ["fillet", "Fillet1"],
];
const panelTabs = ["part", "tree", "config", "target", "darkBall"];
const taskTabs = ["house", "library", "explorer", "palette", "ball", "props", "forum"];
const cubes = ["front", "back", "left", "right", "top", "bottom", "iso", "trimetric", "dimetric"];
const checks = ["spell", "measure", "mass", "sectionProp", "gauge", "perf", "checkCube", "checkBox"];

export default function App() {
  return (
    <Page>
      <Global />
      <Defs />
      <TopBand><Glint /></TopBand>
      <TitleBar>
        <Logo>
          <svg width="28" height="26" viewBox="0 0 28 26" fill="none" stroke="#d3281f" strokeLinecap="round" aria-hidden="true">
            <path d="M9 2Q17 0 17 3Q15 8 8 11" strokeWidth="1.600" />
            <path d="M7 12Q14 11 14 15Q12 20 1 24L8 15" strokeWidth="1.800" />
            <path d="M24 8Q17 7 17 11Q18 13 21 14Q24 18 19 20Q16 21 13 20" strokeWidth="2.400" />
          </svg>
          <span><b>SOLID</b>WORKS</span>
        </Logo>
        <LogoNext aria-label="Show menu"><RightCaret /></LogoNext>
        <Quick>
          {quick.map((q) => (
            <QuickItem key={q}>
              <button aria-label={q}><Icon name={q} size={20} /></button>
              <Caret />
            </QuickItem>
          ))}
          <SelectTool>
            <SelectMain aria-label="Select"><Icon name="cursor" size={20} /></SelectMain>
            <SelectMore aria-label="Select options"><Caret /></SelectMore>
          </SelectTool>
          <QuickItem $w={25}><button aria-label="Rebuild"><Icon name="traffic" size={20} /></button></QuickItem>
          <QuickItem $w={25}><button aria-label="File properties"><Icon name="options" size={20} /></button></QuickItem>
          <QuickItem $w={34}><button aria-label="Options"><Icon name="gear" size={20} /></button><Caret /></QuickItem>
        </Quick>
        <DocTitle>Sledge hammer *</DocTitle>
        <SearchBox>
          <Icon name="help" size={14} />
          <SearchInput aria-label="Search help" placeholder="Search SOLIDWORKS Help" />
          <Icon name="search" size={20} />
          <Caret $color="#777" />
        </SearchBox>
        <WinButtons>
          <HelpMark aria-label="Help">?<Caret /></HelpMark>
          <button aria-label="Minimize"><Icon name="min" size={16} /></button>
          <button aria-label="Restore"><Icon name="restore" size={16} /></button>
          <button aria-label="Close"><Icon name="close" size={16} /></button>
        </WinButtons>
      </TitleBar>

      <Ribbon>
        <BigTool icon="extrude" label={"Extruded\nBoss/Base"} w={57} />
        <BigTool icon="revolve" label={"Revolved\nBoss/Base"} w={58} />
        <SmallTools w={136} items={[["sweep", "Swept Boss/Base"], ["loft", "Lofted Boss/Base"], ["boundary", "Boundary Boss/Base"]]} />
        <Divider />
        <BigTool icon="cutExtrude" label={"Extruded\nCut"} w={52} />
        <BigTool icon="hole" label={"Hole\nWizard"} w={43} menu />
        <BigTool icon="cutRevolve" label={"Revolved\nCut"} w={52} />
        <SmallTools w={104} items={[["cutSweep", "Swept Cut"], ["cutLoft", "Lofted Cut"], ["cutBoundary", "Boundary Cut"]]} />
        <Divider />
        <BigTool icon="fillet" label="Fillet" w={30} menu />
        <BigTool icon="pattern" label={"Linear\nPattern"} w={43} menu />
        <SmallTools w={59} items={[["rib", "Rib"], ["draft", "Draft"], ["shell", "Shell"]]} />
        <SmallTools w={78} items={[["wrap", "Wrap"], ["intersect", "Intersect"], ["mirror", "Mirror"]]} />
        <Divider />
        <BigTool icon="refGeo" label={"Reference\nGeometry"} w={56} menu />
        <BigTool icon="curves" label="Curves" w={43} menu />
        <BigTool icon="instant" label="Instant3D" w={56} on />
      </Ribbon>

      <Work>
        <Center>
          <TabRow>
            {tabs.map(([t, w], i) => <CmdTab key={t} $w={w} $on={i === 0}>{t}</CmdTab>)}
            <HeadsUp>
              {views.map(([v, w, menu]) => (
                <ViewBtn key={v} $w={w} aria-label={v}>
                  <Icon name={v} size={20} />
                  {menu && <Caret $color="#888" />}
                </ViewBtn>
              ))}
            </HeadsUp>
            <DocButtons>
              {["paneL", "paneR", "min", "restore", "close"].map((n) => (
                <button key={n} aria-label={n}><Icon name={n} size={16} /></button>
              ))}
            </DocButtons>
          </TabRow>
          <Body>
            <Panel>
              <Grip><Dot /></Grip>
              <PanelTabs>
                {panelTabs.map((n, i) => (
                  <PanelTab key={n} $on={i === 0} aria-label={n}><Icon name={n} size={20} /></PanelTab>
                ))}
                <PanelMore aria-label="More tabs"><Icon name="chevron" size={14} /></PanelMore>
              </PanelTabs>
              <Filter>
                <Icon name="funnel" size={19} />
                <FilterInput aria-label="Filter tree" />
              </Filter>
              <RootRow><Icon name="part" size={19} />{"Sledge hammer  (Default<<Defa"}</RootRow>
              <Tree>
                {nodes.map(([icon, label, open]) => (
                  <Node key={label}>
                    <NodeArrow>{open && <RightCaret />}</NodeArrow>
                    <NodeBtn><Icon name={icon} size={19} />{label}</NodeBtn>
                  </Node>
                ))}
              </Tree>
              <HScroll><Thumb /></HScroll>
            </Panel>
            <Viewport>
              <Hammer />
              <Handle aria-label="Collapse panel"><Dot /></Handle>
              <TaskTabs>
                {taskTabs.map((n) => (
                  <TaskTab key={n} $on={n === "ball"} aria-label={n}><Icon name={n} size={20} /></TaskTab>
                ))}
              </TaskTabs>
              <Triad width="60" height="66" viewBox="205 570 60 66" aria-label="Axes">
                <path d="M235 608L237 592" stroke="#1f6a24" strokeWidth="3.500" />
                <path d="M232 594L238 583L242 595z" fill="#2b8a30" stroke="#154a18" strokeWidth=".6" />
                <path d="M235 608L247 616" stroke="#c31818" strokeWidth="3.500" />
                <path d="M249 612L256 622L244 619z" fill="#d11d1d" stroke="#7a0c0c" strokeWidth=".6" />
                <path d="M235 608L224 613" stroke="#1d1daa" strokeWidth="3.500" />
                <path d="M222 609L213 618L225 619z" fill="#2323c4" stroke="#101070" strokeWidth=".6" />
                <text x="234" y="583" fontSize="11" fill="#3e8a45">Y</text>
                <text x="254" y="628" fontSize="11" fill="#c03a4a">X</text>
                <text x="207" y="624" fontSize="11" fill="#3535b5">Z</text>
              </Triad>
            </Viewport>
          </Body>
          <SheetRow>
            {["first", "prev", "next", "last"].map((n) => <NavBtn key={n} aria-label={n}><Icon name={n} size={11} /></NavBtn>)}
            <Sheet $w={58} $on>Model</Sheet>
            <Sheet $w={69}>3D Views</Sheet>
            <Sheet $w={114}>Motion Study 1</Sheet>
          </SheetRow>
        </Center>
        <Rail>
          <Dotted />
          <RailGroup $h={33} $pad={5}><RailBtn aria-label="normal to"><Icon name="normal" size={20} /></RailBtn></RailGroup>
          <RailGroup $h={233} $pad={3}>
            {cubes.map((n) => <RailBtn key={n} aria-label={n}><Icon name={n} size={22} /></RailBtn>)}
          </RailGroup>
          <RailGroup $h={33}><RailBtn aria-label="appearance"><Icon name="brush" size={20} /></RailBtn></RailGroup>
          <RailSpace />
          <Dotted />
          <RailSpace />
          <RailGroup $h={204} $last>
            {checks.map((n) => <RailBtn key={n} aria-label={n}><Icon name={n} size={20} /></RailBtn>)}
          </RailGroup>
          <RailMore aria-label="More tools"><Icon name="more" size={10} /></RailMore>
        </Rail>
      </Work>

      <Status>
        <StatusText>SOLIDWORKS Premium 2016 x64 Edition</StatusText>
        <StatusCell $w={68}>Editing Part</StatusCell>
        <Units>MMGS<UpCaret /></Units>
        <StatusEnd><Icon name="tag" size={13} /></StatusEnd>
      </Status>
      <BottomBand />
    </Page>
  );
}
